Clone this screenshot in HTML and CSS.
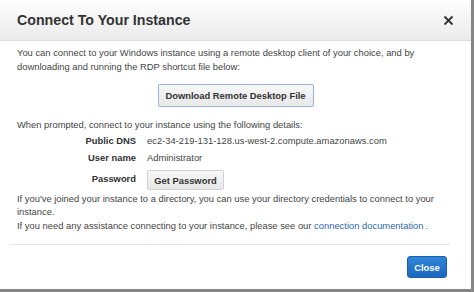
FILE: index.html
```html
<!doctype html>
<html>
<head>
<meta charset="utf-8">
<title>Connect To Your Instance</title>
<link rel="stylesheet" href="styles.css">
</head>
<body>
<div class="dialog">
	<div class="dialogHead">
		<h1 class="dialogTitle">Connect To Your Instance</h1>
		<svg class="dialogX" width="11" height="11" viewBox="0 0 11 11"><path d="M1.5 1.5L9.5 9.5M9.5 1.5L1.5 9.5" stroke="#333" stroke-width="1.8" fill="none"/></svg>
	</div>
	<div class="dialogBody">
		<p class="text">You can connect to your Windows instance using a remote desktop client of your choice, and by downloading and running the RDP shortcut file below:</p>
		<div class="center">
			<button class="btn btnFocus">Download Remote Desktop File</button>
		</div>
		<p class="text">When prompted, connect to your instance using the following details:</p>
		<div class="details">
			<span class="label">Public DNS</span>
			<span class="value">ec2-34-219-131-128.us-west-2.compute.amazonaws.com</span>
			<span class="label">User name</span>
			<span class="value">Administrator</span>
			<span class="label">Password</span>
			<span class="value"><button class="btn btnSmall">Get Password</button></span>
		</div>
		<p class="text textTight">If you've joined your instance to a directory, you can use your directory credentials to connect to your instance.<br>If you need any assistance connecting to your instance, please see our <a class="link" href="#">connection documentation</a>.</p>
	</div>
	<div class="dialogFoot">
		<button class="btnPrimary">Close</button>
	</div>
</div>
</body>
</html>
```
FILE: styles.css
```css
html,
body {
	margin: 0;
	height: 100%;
	overflow: hidden;
}
body {
	background: #858585;
	font-family: Arial, "Liberation Sans", sans-serif;
	font-size: 9.4px;
	color: #454545;
}
.dialog {
	width: 471px;
	height: 289px;
	background: #fff;
	display: flex;
	flex-direction: column;
}
.dialogHead {
	height: 41px;
	box-sizing: border-box;
	display: flex;
	align-items: center;
	justify-content: space-between;
	padding: 0 17px 0 17px;
	background: linear-gradient(#fdfdfd, #ebebeb);
	border-bottom: 1px solid #dcdcdc;
}
.dialogTitle {
	margin: 0;
	font-size: 14.2px;
	font-weight: bold;
	color: #333;
}
.dialogX {
	display: block;
	margin-top: 1px;
}
.dialogBody {
	padding: 5px 17px 0;
}
.text {
	margin: 0;
	line-height: 14px;
	width: 420px;
}
.textTight {
	line-height: 13.4px;
	width: 425px;
}
.center {
	display: flex;
	justify-content: center;
	padding: 10px 0 11px;
}
.btn {
	font-family: inherit;
	font-size: 9.4px;
	font-weight: bold;
	color: #333;
	white-space: nowrap;
	border: 1px solid #d2d2d2;
	border-radius: 2px;
	background: linear-gradient(#f7f7f7, #e8e8e8);
	padding: 0;
	height: 23px;
}
.btnFocus {
	width: 156px;
	border-color: #9fb6da;
	box-shadow: 0 0 1px #b6c8e6;
}
.btnSmall {
	height: 20px;
	width: 77px;
	margin-top: 2px;
	display: block;
}
.details {
	display: grid;
	grid-template-columns: 119px auto;
	column-gap: 11px;
	row-gap: 3px;
	align-items: center;
	padding: 2px 0 2px;
}
.label {
	text-align: right;
	font-weight: bold;
	color: #333;
	line-height: 14px;
}
.value {
	line-height: 14px;
}
.link {
	color: #2e68ad;
	text-decoration: none;
	margin-right: 2px;
}
.dialogFoot {
	margin: 12px 21px 0 9px;
	border-top: 1px solid #e4e4e4;
	display: flex;
	justify-content: flex-end;
	padding-top: 11px;
}
.btnPrimary {
	font-family: inherit;
	font-size: 9.4px;
	font-weight: bold;
	color: #fff;
	height: 22px;
	width: 40px;
	padding: 0;
	border: 1px solid #1b5fae;
	border-radius: 3px;
	background: linear-gradient(#3085d8, #1c68bf);
	margin-right: 3px;
}
```
